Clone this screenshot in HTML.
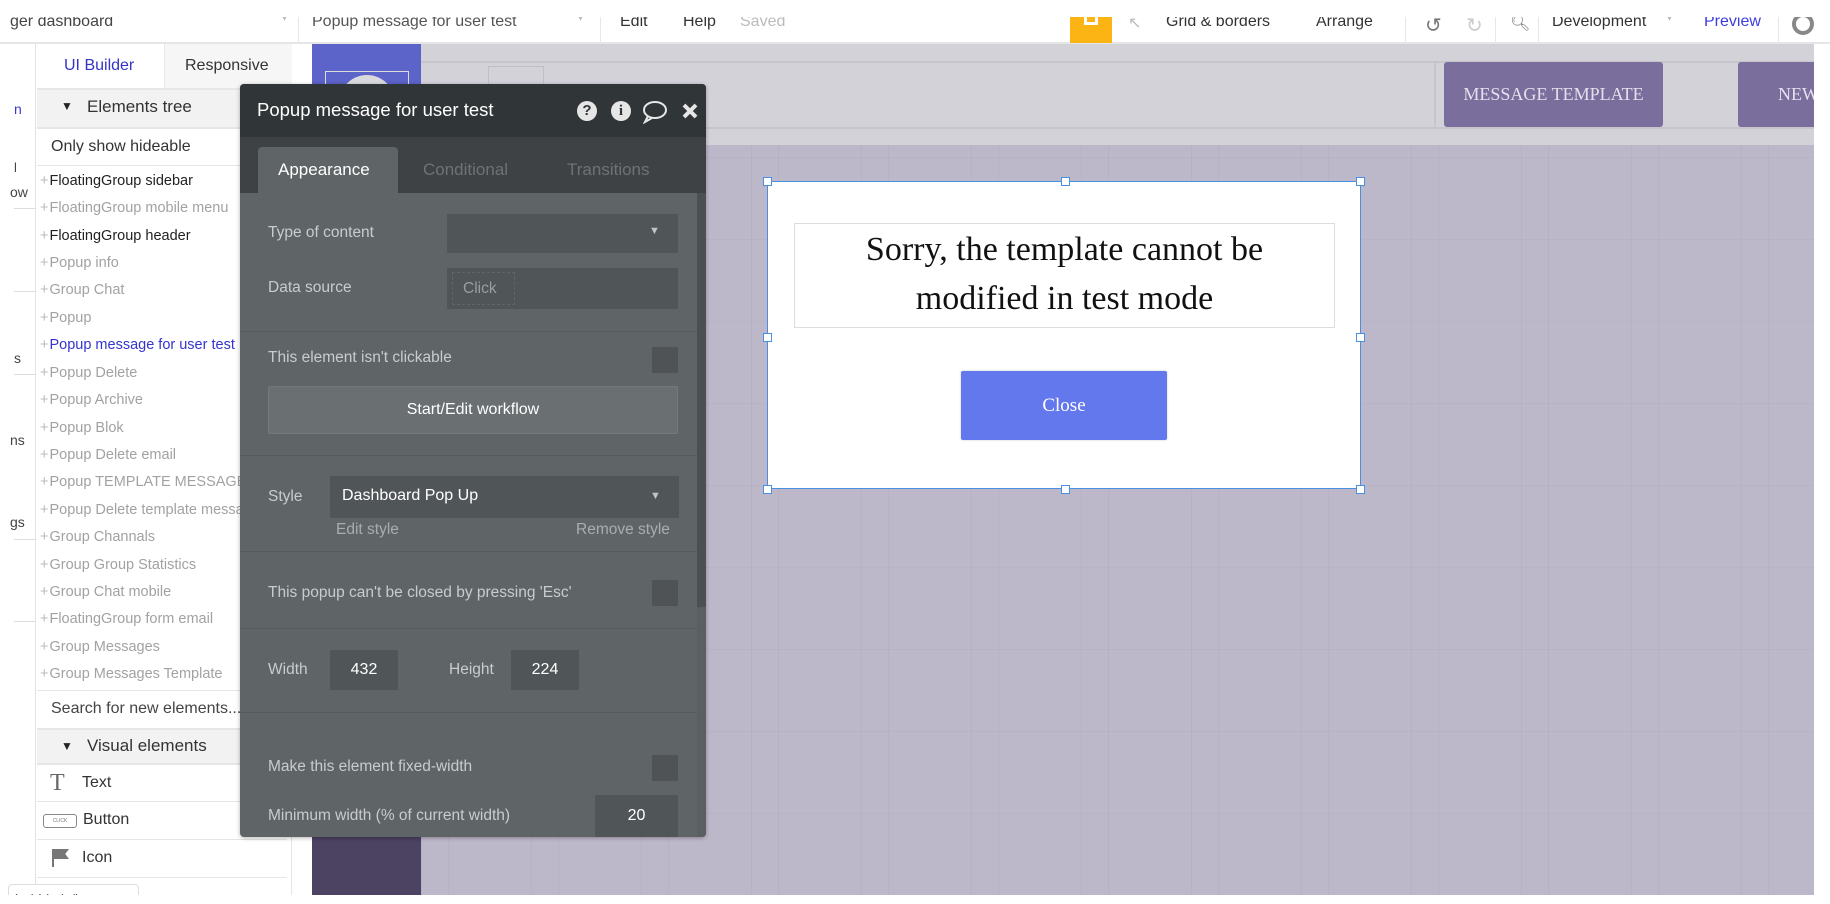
<!DOCTYPE html>
<html><head><meta charset="utf-8"><style>
*{box-sizing:border-box;margin:0;padding:0}
body{width:1830px;height:904px;overflow:hidden;background:#fff;font-family:"Liberation Sans",sans-serif;position:relative}
.a{position:absolute}
.top{font-size:16px;color:#555;white-space:nowrap}
.tree{position:absolute;left:40px;font-size:14.5px;color:#a2a2a2;white-space:nowrap}
.tree b{font-weight:normal;color:#bbb;margin-right:1px}
.lbl{position:absolute;font-size:15.5px;color:#c9cccd;white-space:nowrap;transform:translateY(-50%)}
.box{position:absolute;background:#505558}
.chk{position:absolute;background:#4f5356;width:26px;height:26px}
.div{position:absolute;left:0;width:457px;height:1px;background:#575b5e}
.serif{font-family:"Liberation Serif",serif}
</style></head><body>

<!-- top bar -->
<div class="a" style="left:0;top:0;width:1830px;height:44px;background:#fff;border-bottom:2px solid #e6e6e6"></div>
<div class="a" style="left:0;top:17px;width:1830px;height:26px;overflow:hidden">
  <div class="a top" style="left:10px;top:-4px;color:#444">ger dashboard</div>
  <div class="a top" style="left:282px;top:-4px;color:#bbb;font-size:10px">▾</div>
  <div class="a" style="left:298px;top:0;width:1px;height:26px;background:#e8e8e8"></div>
  <div class="a top" style="left:312px;top:-4px">Popup message for user test</div>
  <div class="a top" style="left:578px;top:-4px;color:#bbb;font-size:10px">▾</div>
  <div class="a" style="left:600px;top:0;width:1px;height:26px;background:#e8e8e8"></div>
  <div class="a top" style="left:620px;top:-4px;color:#333">Edit</div>
  <div class="a top" style="left:683px;top:-4px;color:#333">Help</div>
  <div class="a top" style="left:740px;top:-4px;color:#bbb">Saved</div>
  <div class="a" style="left:1070px;top:-17px;width:42px;height:43px;background:#fbb414"></div>
  <div class="a" style="left:1084px;top:0;width:14px;height:8px;border:3px solid #fff;border-top:none"></div>
  <div class="a top" style="left:1128px;top:-4px;color:#bbb">↖</div>
  <div class="a top" style="left:1166px;top:-4px;color:#333">Grid &amp; borders</div>
  <div class="a top" style="left:1316px;top:-4px;color:#333">Arrange</div>
  <div class="a" style="left:1405px;top:0;width:1px;height:26px;background:#e8e8e8"></div>
  <div class="a top" style="left:1425px;top:-4px;color:#777;font-size:20px">↺</div>
  <div class="a top" style="left:1466px;top:-4px;color:#ccc;font-size:20px">↻</div>
  <div class="a" style="left:1495px;top:0;width:1px;height:26px;background:#e8e8e8"></div>
  <div class="a top" style="left:1510px;top:-4px;color:#777">🔍︎</div>
  <div class="a" style="left:1538px;top:0;width:1px;height:26px;background:#e8e8e8"></div>
  <div class="a top" style="left:1552px;top:-4px;color:#333">Development</div>
  <div class="a top" style="left:1667px;top:-4px;color:#bbb;font-size:10px">▾</div>
  <div class="a top" style="left:1704px;top:-4px;color:#3b3be0">Preview</div>
  <div class="a" style="left:1778px;top:0;width:1px;height:26px;background:#e8e8e8"></div>
  <div class="a" style="left:1792px;top:-4px;width:22px;height:22px;border:4px solid #888;border-radius:50%"></div>
</div>

<!-- far-left strip -->
<div class="a" style="left:14px;top:44px;width:22px;height:851px;background:#fff;border-right:1px solid #e3e3e3"></div>
<div class="a" style="left:14px;top:101px;font-size:14px;color:#3a3ad0">n</div>
<div class="a" style="left:14px;top:160px;font-size:13px;color:#444">l</div>
<div class="a" style="left:10px;top:184px;font-size:14px;color:#444">ow</div>
<div class="a" style="left:14px;top:350px;font-size:14px;color:#444">s</div>
<div class="a" style="left:10px;top:432px;font-size:14px;color:#444">ns</div>
<div class="a" style="left:10px;top:514px;font-size:14px;color:#444">gs</div>
<div class="a" style="left:14px;top:208px;width:22px;height:1px;background:#ddd"></div>
<div class="a" style="left:14px;top:291px;width:22px;height:1px;background:#ddd"></div>
<div class="a" style="left:14px;top:374px;width:22px;height:1px;background:#ddd"></div>
<div class="a" style="left:14px;top:539px;width:22px;height:1px;background:#ddd"></div>
<div class="a" style="left:14px;top:621px;width:22px;height:1px;background:#ddd"></div>

<!-- left panel -->
<div class="a" style="left:37px;top:44px;width:255px;height:851px;background:#fff;border-right:1px solid #e6e6e6"></div>
<div class="a" style="left:164px;top:44px;width:128px;height:44px;background:#f6f6f6;border-left:1px solid #e6e6e6"></div>
<div class="a" style="left:64px;top:57px;font-size:16px;color:#3434c8">UI Builder</div>
<div class="a" style="left:185px;top:57px;font-size:16px;color:#333">Responsive</div>
<div class="a" style="left:37px;top:88px;width:255px;height:41px;background:#f2f2f2;border-top:2px solid #e6e6e6;border-bottom:2px solid #e6e6e6"></div>
<div class="a" style="left:61px;top:99px;font-size:12px;color:#222">▼</div>
<div class="a" style="left:87px;top:97px;font-size:17px;color:#333">Elements tree</div>
<div class="a" style="left:51px;top:138px;font-size:16px;color:#333">Only show hideable</div>
<div class="a" style="left:37px;top:165px;width:255px;height:1px;background:#e6e6e6"></div>
<div class="tree" style="top:173px;color:#222"><b>+</b>FloatingGroup sidebar</div>
<div class="tree" style="top:200px"><b>+</b>FloatingGroup mobile menu</div>
<div class="tree" style="top:228px;color:#222"><b>+</b>FloatingGroup header</div>
<div class="tree" style="top:255px"><b>+</b>Popup info</div>
<div class="tree" style="top:282px"><b>+</b>Group Chat</div>
<div class="tree" style="top:310px"><b>+</b>Popup</div>
<div class="tree" style="top:337px;color:#3434d0"><b>+</b>Popup message for user test</div>
<div class="tree" style="top:365px"><b>+</b>Popup Delete</div>
<div class="tree" style="top:392px"><b>+</b>Popup Archive</div>
<div class="tree" style="top:420px"><b>+</b>Popup Blok</div>
<div class="tree" style="top:447px"><b>+</b>Popup Delete email</div>
<div class="tree" style="top:474px"><b>+</b>Popup TEMPLATE MESSAGE</div>
<div class="tree" style="top:502px"><b>+</b>Popup Delete template message</div>
<div class="tree" style="top:529px"><b>+</b>Group Channals</div>
<div class="tree" style="top:557px"><b>+</b>Group Group Statistics</div>
<div class="tree" style="top:584px"><b>+</b>Group Chat mobile</div>
<div class="tree" style="top:611px"><b>+</b>FloatingGroup form email</div>
<div class="tree" style="top:639px"><b>+</b>Group Messages</div>
<div class="tree" style="top:666px"><b>+</b>Group Messages Template</div>
<div class="a" style="left:37px;top:690px;width:255px;height:1px;background:#e6e6e6"></div>
<div class="a" style="left:51px;top:700px;font-size:16px;color:#444">Search for new elements...</div>
<div class="a" style="left:37px;top:728px;width:255px;height:37px;background:#f2f2f2;border-top:2px solid #e6e6e6;border-bottom:2px solid #e6e6e6"></div>
<div class="a" style="left:61px;top:739px;font-size:12px;color:#222">▼</div>
<div class="a" style="left:87px;top:736px;font-size:17px;color:#333">Visual elements</div>
<div class="a serif" style="left:50px;top:770px;font-size:24px;color:#666">T</div>
<div class="a" style="left:82px;top:774px;font-size:16px;color:#333">Text</div>
<div class="a" style="left:37px;top:801px;width:250px;height:1px;background:#e6e6e6"></div>
<div class="a" style="left:43px;top:814px;width:34px;height:14px;border:1px solid #888;border-radius:3px;font-size:5px;color:#777;text-align:center;line-height:12px">CLICK</div>
<div class="a" style="left:83px;top:811px;font-size:16px;color:#333">Button</div>
<div class="a" style="left:37px;top:839px;width:250px;height:1px;background:#e6e6e6"></div>
<svg class="a" style="left:51px;top:848px" width="18" height="20"><path d="M2 1v18M3 2h13l-3 4 3 4H3" fill="#777" stroke="#777" stroke-width="2"/></svg>
<div class="a" style="left:82px;top:849px;font-size:16px;color:#333">Icon</div>
<div class="a" style="left:37px;top:877px;width:250px;height:1px;background:#e6e6e6"></div>
<div class="a" style="left:8px;top:884px;width:131px;height:20px;border:1px solid #ddd;border-radius:4px;background:#fff;font-size:14px;color:#555;padding-left:6px;overflow:hidden;line-height:28px">bubble.is/home</div>
<div class="a" style="left:0;top:895px;width:1830px;height:9px;background:#fff"></div>

<!-- canvas -->
<div class="a" style="left:312px;top:44px;width:1502px;height:851px;background:#bdb8c9;
background-image:repeating-linear-gradient(90deg,rgba(0,0,0,0) 0 26px,rgba(120,110,140,.09) 26px 27px,rgba(0,0,0,0) 27px 109px,rgba(120,110,140,.09) 109px 110px),repeating-linear-gradient(0deg,rgba(0,0,0,0) 0 81px,rgba(120,110,140,.07) 81px 82px)"></div>
<div class="a" style="left:312px;top:44px;width:1502px;height:101px;background:#d3d2d9"></div>
<div class="a" style="left:421px;top:61px;width:1393px;height:68px;border-top:2px solid #c6c5cc;border-bottom:2px solid #c6c5cc"></div>
<div class="a" style="left:1434px;top:61px;width:2px;height:68px;background:#c6c5cc"></div>
<div class="a" style="left:312px;top:44px;width:109px;height:851px;background:#4c4262"></div>
<div class="a" style="left:312px;top:44px;width:109px;height:86px;background:#5c63c9"></div>
<div class="a" style="left:325px;top:71px;width:84px;height:50px;border:1px solid #ddd"></div>
<div class="a" style="left:339px;top:75px;width:56px;height:56px;border-radius:50%;background:#d9d9de"></div>
<div class="a" style="left:488px;top:66px;width:56px;height:24px;border:1px solid #c0bfc6"></div>
<div class="a" style="left:1444px;top:62px;width:219px;height:65px;background:#7a6e9c;border-radius:3px;color:#e4e0ee;font-size:18px;text-align:center;line-height:65px;font-family:'Liberation Serif',serif">MESSAGE TEMPLATE</div>
<div class="a" style="left:1738px;top:62px;width:76px;height:65px;background:#7a6e9c;border-radius:3px 0 0 3px;color:#e4e0ee;font-size:18px;line-height:65px;padding-left:40px;overflow:hidden;font-family:'Liberation Serif',serif">NEW</div>

<!-- canvas popup -->
<div class="a" style="left:767px;top:181px;width:594px;height:308px;background:#fff;border:1px solid #4a90e2"></div>
<div class="a" style="left:794px;top:223px;width:541px;height:105px;border:1px solid #ddd"></div>
<div class="a serif" style="left:794px;top:225px;width:541px;text-align:center;font-size:34px;line-height:49px;color:#111">Sorry, the template cannot be<br>modified in test mode</div>
<div class="a serif" style="left:961px;top:371px;width:206px;height:69px;background:#6478ee;border-radius:2px;color:#fff;font-size:19px;text-align:center;line-height:69px;box-shadow:0 0 2px rgba(0,0,0,.2)">Close</div>
<div class="a" style="left:763px;top:177px;width:9px;height:9px;border:1px solid #4a90e2;background:#fff"></div>
<div class="a" style="left:1061px;top:177px;width:9px;height:9px;border:1px solid #4a90e2;background:#fff"></div>
<div class="a" style="left:1356px;top:177px;width:9px;height:9px;border:1px solid #4a90e2;background:#fff"></div>
<div class="a" style="left:763px;top:333px;width:9px;height:9px;border:1px solid #4a90e2;background:#fff"></div>
<div class="a" style="left:1356px;top:333px;width:9px;height:9px;border:1px solid #4a90e2;background:#fff"></div>
<div class="a" style="left:763px;top:485px;width:9px;height:9px;border:1px solid #4a90e2;background:#fff"></div>
<div class="a" style="left:1061px;top:485px;width:9px;height:9px;border:1px solid #4a90e2;background:#fff"></div>
<div class="a" style="left:1356px;top:485px;width:9px;height:9px;border:1px solid #4a90e2;background:#fff"></div>
<div class="a" style="left:1814px;top:44px;width:16px;height:860px;background:#fff"></div>

<!-- property editor -->
<div class="a" style="left:240px;top:84px;width:466px;height:753px;background:#5f6467;border-radius:4px;overflow:hidden;box-shadow:0 1px 4px rgba(0,0,0,.3)">
  <div class="a" style="left:0;top:0;width:466px;height:53px;background:#303537"></div>
  <div class="a" style="left:17px;top:15px;font-size:18.5px;color:#fff">Popup message for user test</div>
  <div class="a" style="left:337px;top:17px;width:20px;height:20px;border-radius:50%;background:#e6e6e6;color:#303537;font-weight:bold;font-size:15px;text-align:center;line-height:20px">?</div>
  <div class="a" style="left:371px;top:17px;width:20px;height:20px;border-radius:50%;background:#e6e6e6;color:#303537;font-weight:bold;font-size:15px;text-align:center;line-height:20px;font-family:'Liberation Serif',serif">i</div>
  <svg class="a" style="left:402px;top:16px" width="26" height="24"><ellipse cx="13" cy="10" rx="11" ry="8" fill="none" stroke="#e6e6e6" stroke-width="2"/><path d="M6 16l-3 6 7-4" fill="none" stroke="#e6e6e6" stroke-width="2"/></svg>
  <svg class="a" style="left:442px;top:19px" width="16" height="16"><path d="M2 2L14 14M14 2L2 14" stroke="#e6e6e6" stroke-width="4"/></svg>
  <div class="a" style="left:0;top:53px;width:466px;height:56px;background:#3e4245"></div>
  <div class="a" style="left:18px;top:63px;width:140px;height:46px;background:#5f6467;border-radius:4px 4px 0 0"></div>
  <div class="a" style="left:38px;top:76px;font-size:17px;color:#fff">Appearance</div>
  <div class="a" style="left:183px;top:76px;font-size:17px;color:#6d7276">Conditional</div>
  <div class="a" style="left:327px;top:76px;font-size:17px;color:#6d7276">Transitions</div>
  <div class="a" style="left:457px;top:109px;width:9px;height:644px;background:#5a5f62"></div>
  <div class="a" style="left:457px;top:109px;width:9px;height:414px;background:#4b5053"></div>

  <div class="lbl" style="left:28px;top:149px">Type of content</div>
  <div class="box" style="left:207px;top:130px;width:231px;height:39px"></div>
  <div class="a" style="left:409px;top:141px;font-size:11px;color:#c0c3c5">▼</div>
  <div class="lbl" style="left:28px;top:204px">Data source</div>
  <div class="box" style="left:207px;top:184px;width:231px;height:41px"></div>
  <div class="a" style="left:212px;top:188px;width:63px;height:33px;border:1px dashed #5f6467;font-size:15.5px;color:#9a9ea0;line-height:31px;padding-left:10px">Click</div>
  <div class="div" style="top:247px"></div>
  <div class="lbl" style="left:28px;top:274px">This element isn't clickable</div>
  <div class="chk" style="left:412px;top:263px"></div>
  <div class="a" style="left:28px;top:302px;width:410px;height:48px;background:#6a6f72;border:1px solid #74797c;border-radius:2px;color:#fff;font-size:16px;text-align:center;line-height:46px">Start/Edit workflow</div>
  <div class="div" style="top:371px"></div>
  <div class="lbl" style="left:28px;top:413px">Style</div>
  <div class="box" style="left:90px;top:392px;width:349px;height:42px"></div>
  <div class="a" style="left:102px;top:403px;font-size:16px;color:#fff">Dashboard Pop Up</div>
  <div class="a" style="left:410px;top:406px;font-size:11px;color:#c0c3c5">▼</div>
  <div class="lbl" style="left:96px;top:446px;color:#a9adaf">Edit style</div>
  <div class="lbl" style="left:336px;top:446px;color:#a9adaf">Remove style</div>
  <div class="div" style="top:467px"></div>
  <div class="lbl" style="left:28px;top:509px">This popup can't be closed by pressing 'Esc'</div>
  <div class="chk" style="left:412px;top:496px"></div>
  <div class="div" style="top:544px"></div>
  <div class="lbl" style="left:28px;top:586px">Width</div>
  <div class="box" style="left:90px;top:566px;width:68px;height:40px;color:#fff;font-size:16px;text-align:center;line-height:40px">432</div>
  <div class="lbl" style="left:209px;top:586px">Height</div>
  <div class="box" style="left:271px;top:566px;width:68px;height:40px;color:#fff;font-size:16px;text-align:center;line-height:40px">224</div>
  <div class="div" style="top:628px"></div>
  <div class="lbl" style="left:28px;top:683px">Make this element fixed-width</div>
  <div class="chk" style="left:412px;top:671px"></div>
  <div class="lbl" style="left:28px;top:732px">Minimum width (% of current width)</div>
  <div class="box" style="left:355px;top:711px;width:83px;height:42px;color:#fff;font-size:16px;text-align:center;line-height:42px">20</div>
</div>
</body></html>
